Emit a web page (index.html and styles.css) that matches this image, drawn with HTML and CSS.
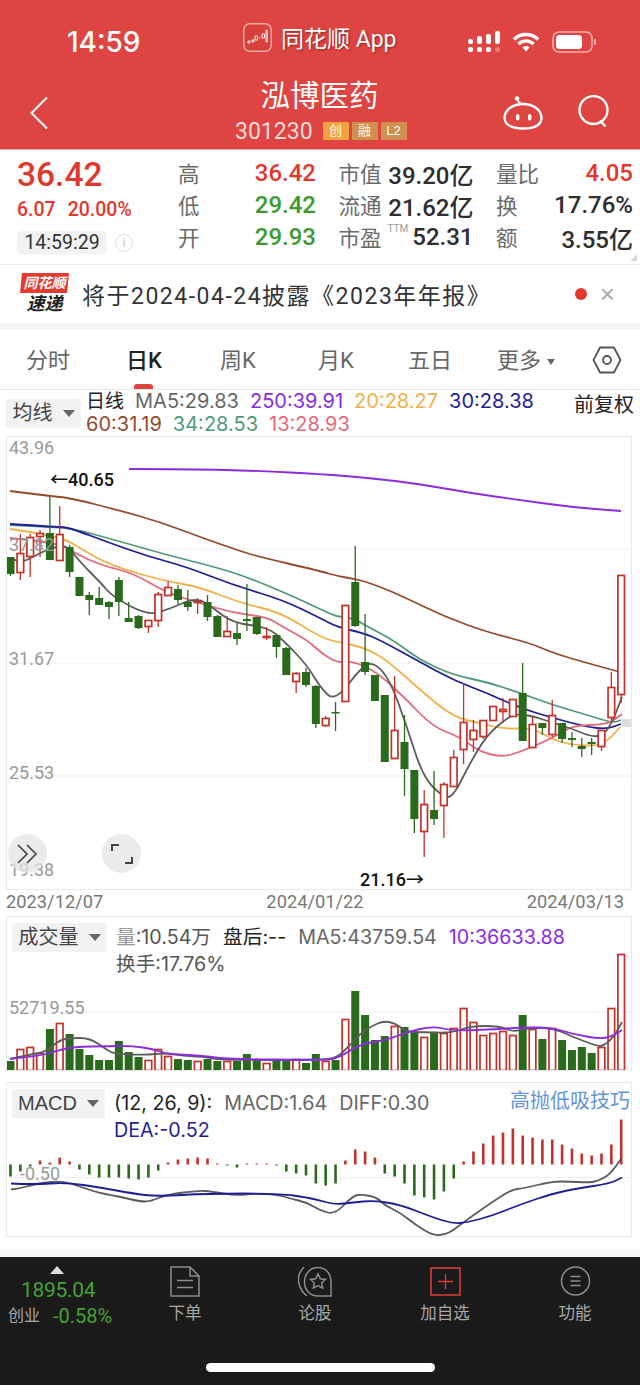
FILE: index.html
```html
<!DOCTYPE html>
<html lang="zh-CN">
<head>
    <meta charset="UTF-8">
    <meta name="viewport" content="width=device-width, initial-scale=1.0">
    <title>泓博医药</title>
    <link rel="stylesheet" href="styles.css">
</head>
<body>
    <div class="top-bar">
        <div class="status-row">
            <span class="clock">14:59</span>
            <div class="app-name">
                <svg class="app-icon" width="29" height="29" viewBox="0 0 29 29">
                    <rect x="0.75" y="0.75" width="27.5" height="27.5" rx="6" fill="#d8403c" stroke="#f0aaa6" stroke-width="1.5"/>
                    <path d="M5 18h2v2H5zM9 17h2v2H9zM12 13h2.500v4H12zM16 15h1.500M19 11h2.500v4H19zM23 7h1.200v12H23z" stroke="#fff" stroke-width="0.9" fill="none"/>
                </svg>
                <span>同花顺 App</span>
            </div>
            <div class="status-icons">
                <svg width="32" height="22" viewBox="0 0 32 22">
                    <g fill="#fff">
                        <rect x="0" y="16" width="5" height="5" rx="2"/>
                        <rect x="9" y="16" width="5" height="5" rx="2"/>
                        <rect x="18" y="16" width="5" height="5" rx="2"/>
                        <rect x="27" y="16" width="5" height="5" rx="2" opacity="0.3"/>
                        <rect x="0" y="8" width="5" height="5" rx="2"/>
                        <rect x="9" y="5" width="5" height="8" rx="2"/>
                        <rect x="18" y="3" width="5" height="10" rx="2"/>
                        <rect x="27" y="0" width="5" height="13" rx="2"/>
                    </g>
                </svg>
                <svg width="28" height="20" viewBox="0 0 28 20">
                    <path d="M2 7.5a17 17 0 0 1 24 0M6.5 12a10.5 10.5 0 0 1 15 0" fill="none" stroke="#fff" stroke-width="3.4"/>
                    <path d="M10.5 15.5a5 5 0 0 1 7 0L14 19.5z" fill="#fff"/>
                </svg>
                <svg width="45" height="22" viewBox="0 0 45 22">
                    <rect x="1" y="1" width="39" height="20" rx="6" fill="none" stroke="#f3b0ad" stroke-width="1.6"/>
                    <rect x="4" y="4" width="26" height="14" rx="3.5" fill="#fff"/>
                    <rect x="42" y="8" width="2" height="6" rx="1" fill="#f3b0ad"/>
                </svg>
            </div>
        </div>
        <div class="title-row">
            <svg class="back-icon" width="20" height="34" viewBox="0 0 20 34">
                <path d="M18 1.5 2.5 17 18 32.5" fill="none" stroke="#fff" stroke-width="2"/>
            </svg>
            <div class="stock-title">
                <h1>泓博医药</h1>
                <div class="stock-code">
                    <span class="code">301230</span>
                    <span class="badge badge-orange">创</span>
                    <span class="badge">融</span>
                    <span class="badge">L2</span>
                </div>
            </div>
            <div class="title-icons">
                <svg width="40" height="36" viewBox="0 0 40 36">
                    <circle cx="14" cy="3.5" r="2.2" fill="#fff"/>
                    <path d="M14 4c.8 2 2 3.500 4 4.500" fill="none" stroke="#fff" stroke-width="2"/>
                    <path d="M20 9c10 0 18 5.500 18.500 13.500C38.500 30 31 33.500 20 33.500S1.500 30 1.500 22.500C2 14.500 10 9 20 9z" fill="none" stroke="#fff" stroke-width="2.400"/>
                    <rect x="13" y="19" width="3.400" height="6.500" rx="1.700" fill="#fff"/>
                    <rect x="25" y="19" width="3.400" height="6.500" rx="1.700" fill="#fff"/>
                </svg>
                <svg width="34" height="32" viewBox="0 0 34 32">
                    <circle cx="16.5" cy="15" r="14" fill="none" stroke="#fff" stroke-width="2.3"/>
                    <path d="M23 25.5 28.500 31.500" stroke="#fff" stroke-width="2.3"/>
                </svg>
            </div>
        </div>
    </div>

    <div class="quote">
        <div class="quote-main">
            <div class="price">36.42</div>
            <div class="change"><span>6.07</span><span>20.00%</span></div>
            <div class="quote-time">
                <span class="time-pill">14:59:29</span>
                <span class="info-icon">i</span>
            </div>
        </div>
        <div class="quote-grid">
            <div class="cell"><span class="label">高</span><span class="up">36.42</span></div>
            <div class="cell"><span class="label">市值</span><span>39.20亿</span></div>
            <div class="cell"><span class="label">量比</span><span class="up">4.05</span></div>
            <div class="cell"><span class="label">低</span><span class="down">29.42</span></div>
            <div class="cell"><span class="label">流通</span><span>21.62亿</span></div>
            <div class="cell"><span class="label">换</span><span>17.76%</span></div>
            <div class="cell"><span class="label">开</span><span class="down">29.93</span></div>
            <div class="cell"><span class="label">市盈<sup>TTM</sup></span><span>52.31</span></div>
            <div class="cell"><span class="label">额</span><span>3.55亿</span></div>
        </div>
        <span class="corner"></span>
    </div>

    <div class="notice">
        <div class="notice-logo">
            <span class="logo-top">同花顺</span>
            <span class="logo-bottom">速递</span>
        </div>
        <span class="notice-text">将于2024-04-24披露《2023年年报》</span>
        <span class="notice-dot"></span>
        <span class="notice-close">×</span>
    </div>

    <div class="tabs">
        <span class="tab tab-1">分时</span>
        <span class="tab tab-2 active">日K</span>
        <span class="tab tab-3">周K</span>
        <span class="tab tab-4">月K</span>
        <span class="tab tab-5">五日</span>
        <span class="tab tab-6">更多<i class="caret small"></i></span>
        <svg class="hex-icon" width="30" height="28" viewBox="0 0 30 28">
            <path d="M8 1.5h14L28.500 14 22 26.500H8L1.500 14z" fill="none" stroke="#555" stroke-width="1.8" stroke-linejoin="round"/>
            <circle cx="15" cy="14" r="4" fill="none" stroke="#555" stroke-width="1.8"/>
        </svg>
    </div>

    <div class="kline-head">
        <div class="select select-ma">均线<i class="caret"></i></div>
        <div class="legend">
            <span class="ink">日线</span>
            <span class="ma5">MA5:29.83</span>
            <span class="ma250">250:39.91</span>
            <span class="ma20">20:28.27</span>
            <span class="ma30">30:28.38</span>
            <span class="ma60">60:31.19</span>
            <span class="ma34">34:28.53</span>
            <span class="ma13">13:28.93</span>
        </div>
        <span class="adjust">前复权</span>
    </div>

    <div class="panel kline-panel">
        <svg id="klineChart" class="chart" viewBox="6 436 626 454"></svg>
        <button class="round-btn btn-more">
            <svg width="24" height="20" viewBox="0 0 24 20"><path d="M2 1l9 9-9 9M11 1l9 9-9 9" fill="none" stroke="#444" stroke-width="1.7"/></svg>
        </button>
        <button class="round-btn btn-full">
            <svg width="22" height="22" viewBox="0 0 22 22"><path d="M1 8V2h7M21 14v6h-7" fill="none" stroke="#444" stroke-width="2"/></svg>
        </button>
    </div>
    <div class="dates">
        <span>2023/12/07</span>
        <span>2024/01/22</span>
        <span>2024/03/13</span>
    </div>

    <div class="panel sub-panel">
        <svg id="volChart" class="chart" viewBox="6 916 626 155"></svg>
        <div class="sub-head">
            <div class="select select-vol">成交量<i class="caret"></i></div>
            <div class="sub-legend">
                <span><b class="muted">量</b>:10.54万</span>
                <span class="ink">盘后:--</span>
                <span class="ma5">MA5:43759.54</span>
                <span class="ma250">10:36633.88</span>
                <span class="wide">换手:17.76%</span>
            </div>
        </div>
    </div>

    <div class="panel sub-panel macd-panel">
        <svg id="macdChart" class="chart" viewBox="6 1082 626 154"></svg>
        <div class="sub-head">
            <div class="select select-macd">MACD<i class="caret"></i></div>
            <div class="sub-legend">
                <span class="ink">(12, 26, 9):</span>
                <span class="ma5">MACD:1.64</span>
                <span class="ma5">DIFF:0.30</span>
                <span class="ma30 wide">DEA:-0.52</span>
            </div>
            <span class="tip-link">高抛低吸技巧</span>
        </div>
    </div>

    <div class="bottom-nav">
        <div class="index-box">
            <i class="index-arrow"></i>
            <div class="index-value">1895.04</div>
            <div class="index-change"><span>创业</span><b>-0.58%</b></div>
        </div>
        <div class="nav-item">
            <svg width="30" height="31" viewBox="0 0 30 31">
                <path d="M1 1h19l9 9v20H1zM20 1v9h9M7 14.5h16M7 21.5h16" fill="none" stroke="#8c8c8c" stroke-width="1.5"/>
            </svg>
            <span>下单</span>
        </div>
        <div class="nav-item">
            <svg width="34" height="31" viewBox="0 0 34 31">
                <path d="M33 30H20C12 30 6.500 24 6.500 16S12 1.500 20 1.500 33 8 33 16z" fill="none" stroke="#8c8c8c" stroke-width="1.5"/>
                <path d="M6 1C1 6-.2 12 .8 17 2 23 5 27 9 30" fill="none" stroke="#8c8c8c" stroke-width="1.5"/>
                <path d="M20 8l2.300 4.700 5.200.7-3.800 3.600.9 5.100-4.600-2.400-4.600 2.400.9-5.100-3.800-3.600 5.200-.7z" fill="none" stroke="#8c8c8c" stroke-width="1.5"/>
            </svg>
            <span>论股</span>
        </div>
        <div class="nav-item">
            <svg width="31" height="31" viewBox="0 -1 31 31">
                <rect x="1" y="1" width="29" height="27" fill="none" stroke="#d63a34" stroke-width="1.6"/>
                <path d="M15.5 7v15M8 14.5h15" stroke="#d63a34" stroke-width="1.4"/>
            </svg>
            <span>加自选</span>
        </div>
        <div class="nav-item">
            <svg width="31" height="31" viewBox="0 0 31 31">
                <circle cx="15.5" cy="15" r="14" fill="none" stroke="#8c8c8c" stroke-width="1.5"/>
                <path d="M10.5 10.5h10M10.5 15h10M10.5 19.5h10" stroke="#8c8c8c" stroke-width="1.5"/>
            </svg>
            <span>功能</span>
        </div>
        <span class="home-bar"></span>
    </div>

    <script src="script.js"></script>
</body>
</html>
```

FILE: styles.css
```css
* {
    box-sizing: border-box;
}

body {
    width: 640px;
    height: 1385px;
    margin: 0;
    overflow: hidden;
    font-family: "Liberation Sans", "Noto Sans CJK SC", sans-serif;
    color: #333;
    background: #fff;
}

/* red header */
.top-bar {
    height: 150px;
    color: #fff;
    background: #de4442;
    border-bottom: 1px solid #eeb4b0;
}

.status-row {
    position: relative;
    display: flex;
    align-items: center;
    justify-content: space-between;
    height: 72px;
    padding: 12px 43px 0 67px;
}

.clock {
    font-family: "Inter", sans-serif;
    font-size: 28px;
    font-weight: 500;
}

.app-name {
    position: absolute;
    top: 20px;
    left: 243px;
    display: flex;
    align-items: center;
    gap: 9px;
    font-size: 23px;
    font-family: "Roboto", "Noto Sans CJK SC", sans-serif;
    text-shadow: 1px 1px 2px rgba(90, 20, 20, 0.6);
}

.status-icons {
    display: flex;
    align-items: center;
    gap: 12px;
}

.title-row {
    display: flex;
    justify-content: space-between;
    height: 77px;
    padding: 0 29px;
}

.back-icon {
    margin-top: 24px;
}

.stock-title {
    position: absolute;
    left: 0;
    width: 640px;
    text-align: center;
}

.stock-title h1 {
    margin: 7px 0 0 -1px;
    font-size: 29.5px;
    font-weight: 400;
    line-height: 34px;
}

.stock-code {
    display: flex;
    align-items: center;
    gap: 3px;
    height: 20px;
    margin: 8px 0 0 235px;
}

.code {
    margin-right: 7px;
    font-family: "Roboto", sans-serif;
    font-size: 23px;
    color: #f8dcdc;
}

.badge {
    width: 26px;
    height: 18px;
    font-size: 13px;
    line-height: 18px;
    text-align: center;
    background: #cf9050;
}

.badge-orange {
    background: #f3a23e;
}

.title-icons {
    display: flex;
    gap: 34px;
    height: 36px;
    margin-top: 23px;
}

/* price block */
.quote {
    position: relative;
    display: flex;
    height: 115px;
    background: #fff;
    border-bottom: 1px solid #ececec;
    font-family: "Roboto", "Noto Sans CJK SC", sans-serif;
}

.quote-main {
    flex-shrink: 0;
    width: 178px;
    padding: 6px 0 0 17px;
}

.price {
    font-size: 33.5px;
    font-weight: 500;
    line-height: 38px;
    color: #e2382c;
}

.change {
    display: flex;
    gap: 12px;
    margin-top: 4px;
    font-size: 19.5px;
    font-weight: 500;
    line-height: 24px;
    color: #e2382c;
}

.quote-time {
    display: flex;
    align-items: center;
    gap: 8px;
    margin-top: 9px;
}

.time-pill {
    width: 90px;
    height: 23px;
    font-size: 19.5px;
    line-height: 23px;
    text-align: center;
    color: #333;
    background: #f2f2f2;
    border-radius: 5px;
}

.info-icon {
    width: 18px;
    height: 18px;
    font-size: 13px;
    line-height: 15px;
    text-align: center;
    color: #ccc;
    border: 1.5px solid #ddd;
    border-radius: 50%;
}

.quote-grid {
    display: grid;
    grid-template-columns: 138px 135px 137px;
    grid-auto-rows: 32px;
    column-gap: 22.5px;
    padding-top: 7px;
}

.cell {
    display: flex;
    align-items: center;
    justify-content: space-between;
    font-size: 24px;
    font-weight: 500;
    color: #2e2e2e;
}

.label {
    position: relative;
    top: -1px;
    font-size: 21.5px;
    font-weight: 400;
    color: #6a6a6a;
}

.label sup {
    position: absolute;
    top: 3px;
    left: 49px;
    font-size: 10px;
    line-height: 10px;
    color: #999;
}

.up {
    color: #e2382c;
}

.down {
    color: #3c9a2e;
}

.corner {
    position: absolute;
    right: 3px;
    bottom: 3px;
    border-left: 7px solid transparent;
    border-bottom: 7px solid #d8d8d8;
}

/* notice */
.notice {
    display: flex;
    align-items: center;
    height: 58px;
    padding: 0 25px 0 20px;
    background: #fff;
}

.notice-logo {
    display: flex;
    flex-direction: column;
    align-items: center;
    width: 49px;
    margin-right: 13px;
    font-style: italic;
    font-weight: 700;
}

.logo-top {
    width: 49px;
    height: 20px;
    font-size: 14px;
    line-height: 20px;
    text-align: center;
    color: #fff;
    background: #e53a2f;
    clip-path: polygon(4% 0, 100% 0, 96% 100%, 0 100%);
}

.logo-bottom {
    margin-top: 1px;
    font-size: 18px;
    line-height: 21px;
    color: #222;
}

.notice-text {
    flex: 1;
    font-family: "Roboto", "Noto Sans CJK SC", sans-serif;
    font-size: 23px;
    letter-spacing: 1.5px;
    color: #333;
}

.notice-dot {
    width: 12px;
    height: 12px;
    margin-right: 13px;
    background: #e2382c;
    border-radius: 50%;
}

.notice-close {
    font-size: 26px;
    line-height: 26px;
    color: #aaa;
}

/* tabs */
.tabs {
    position: relative;
    height: 67px;
    background: #fff;
    border-top: 7px solid #f5f5f5;
    border-bottom: 1px solid #e6e6e6;
}

.tab {
    position: absolute;
    top: 15px;
    font-family: "Roboto", "Noto Sans CJK SC", sans-serif;
    font-size: 22px;
    line-height: 32px;
    color: #666;
}

.tab-1 { left: 26px; }
.tab-2 { left: 126px; }
.tab-3 { left: 220px; }
.tab-4 { left: 318px; }
.tab-5 { left: 408px; }
.tab-6 { left: 497px; }

.tab.active {
    font-weight: 500;
    color: #222;
}

.tab.active::after {
    content: "";
    position: absolute;
    top: 39px;
    left: 8px;
    width: 19px;
    height: 5px;
    background: #de4442;
    border-radius: 3px 3px 0 0;
}

.hex-icon {
    position: absolute;
    top: 16px;
    left: 592px;
}

.caret {
    display: inline-block;
    margin-left: 10px;
    vertical-align: 3px;
    border-top: 7px solid #666;
    border-left: 6px solid transparent;
    border-right: 6px solid transparent;
}

.caret.small {
    margin-left: 6px;
    border-top-width: 6px;
    border-left-width: 4.5px;
    border-right-width: 4.5px;
}

/* K line */
.kline-head {
    position: relative;
    display: flex;
    height: 46px;
    padding: 9px 0 0 6px;
    background: #fff;
}

.select {
    height: 29px;
    font-size: 20px;
    line-height: 29px;
    text-align: center;
    color: #444;
    background: #f2f2f2;
    border-radius: 2px;
}

.select-ma {
    width: 75px;
}

.legend {
    display: flex;
    flex-wrap: wrap;
    align-content: flex-start;
    column-gap: 11px;
    width: 480px;
    margin: -9px 0 0 5px;
    font-family: "Inter", "Noto Sans CJK SC", sans-serif;
    font-size: 20px;
    line-height: 23px;
}

.legend .ink {
    font-size: 19px;
}

.ink { color: #222; }
.muted { font-weight: 400; color: #999; }
.ma5 { color: #666; }
.ma250 { color: #8b2be2; }
.ma20 { color: #efb24a; }
.ma30 { color: #1e1e96; }
.ma60 { color: #96492c; }
.ma34 { color: #4f9b78; }
.ma13 { color: #e4697a; }

.adjust {
    position: absolute;
    top: 3px;
    right: 6px;
    font-size: 20px;
    line-height: 24px;
    color: #222;
}

.panel {
    position: relative;
    width: 626px;
    margin-left: 6px;
    background: #fff;
    outline: 1px solid #e8e8e8;
    outline-offset: -1px;
}

.kline-panel {
    height: 454px;
}

.chart {
    display: block;
    width: 100%;
    height: 100%;
}

.chart text {
    font-family: "Roboto", sans-serif;
    font-size: 18px;
    fill: #999;
}

.chart text.mark {
    font-family: "Roboto", "Noto Sans CJK SC", sans-serif;
    font-weight: 500;
    fill: #111;
}

.round-btn {
    position: absolute;
    top: 398px;
    display: flex;
    align-items: center;
    justify-content: center;
    width: 39px;
    height: 39px;
    padding: 0;
    background: rgba(228, 228, 228, 0.75);
    border: none;
    border-radius: 50%;
}

.btn-more { left: 2px; }
.btn-full { left: 96px; }

.dates {
    display: flex;
    justify-content: space-between;
    height: 26px;
    padding: 0 16px 0 6px;
    font-family: "Roboto", sans-serif;
    font-size: 18.3px;
    line-height: 24px;
    color: #777;
    background: #fff;
}

/* volume and MACD */
.sub-panel {
    height: 155px;
}

.macd-panel {
    margin-top: 11px;
}

.sub-head {
    position: absolute;
    top: 7px;
    left: 6px;
    right: 0;
    display: flex;
    gap: 9px;
}

.select-vol {
    flex-shrink: 0;
    width: 95px;
}

.select-macd {
    flex-shrink: 0;
    width: 93px;
}

.sub-legend {
    display: flex;
    flex-wrap: wrap;
    align-content: flex-start;
    column-gap: 12px;
    width: 470px;
    padding-top: 1px;
    font-family: "Inter", "Noto Sans CJK SC", sans-serif;
    font-size: 19.7px;
    line-height: 27px;
    color: #555;
}

.wide {
    flex-basis: 100%;
}

.tip-link {
    position: absolute;
    top: -1px;
    right: 2px;
    font-size: 20px;
    line-height: 26px;
    color: #5f93dd;
}

/* bottom nav */
.bottom-nav {
    position: absolute;
    top: 1250px;
    left: 0;
    display: flex;
    width: 640px;
    height: 135px;
    color: #a8a8a8;
    background: #1a1a1a;
    border-top: 7px solid #f5f5f5;
}

.index-box {
    width: 120px;
    padding: 9px 0 0 8px;
    font-family: "Roboto", "Noto Sans CJK SC", sans-serif;
}

.index-arrow {
    display: block;
    width: 0;
    margin-left: 42px;
    border-bottom: 8px solid #ddd;
    border-left: 7px solid transparent;
    border-right: 7px solid transparent;
}

.index-value {
    margin: 2px 0 0 13px;
    font-size: 21px;
    line-height: 28px;
    letter-spacing: -0.3px;
    color: #46a236;
}

.index-change {
    display: flex;
    gap: 13px;
    font-size: 16px;
    line-height: 24px;
}

.index-change b {
    font-size: 20px;
    font-weight: 400;
    color: #46a236;
}

.nav-item {
    display: flex;
    flex-direction: column;
    align-items: center;
    width: 130px;
    padding-top: 9px;
    font-size: 16.5px;
    line-height: 24px;
}

.nav-item svg {
    margin-bottom: 4px;
}

.home-bar {
    position: absolute;
    top: 106px;
    left: 206px;
    width: 229px;
    height: 9px;
    background: #fff;
    border-radius: 5px;
}
```

FILE: script.js
```js
const candleGreen = "#2a6a1c";
const candleRed = "#c4302a";
const firstX = 10.5;
const stepX = 9.85;
const svgNS = "http://www.w3.org/2000/svg";

// type, high, box top, box bottom, low (page y)
const candles = [
    ["g",557,557,574,576],["r",534,553,573,580],["r",534,537,557,577],["r",530,533,537,557],
    ["g",497,533,560,560],["r",506,534,561,561],["g",545,547,572,577],["g",577,577,596,596],
    ["g",592,595,600,615],["g",587,598,605,605],["g",601,602,607,619],["g",577,580,602,616],
    ["g",602,618,622,622],["g",615,616,628,629],["r",620,620,627,633],["r",592,594,621,627],
    ["r",581,587,596,596],["g",585,589,600,604],["g",590,602,607,611],["r",598,601,602,614],
    ["g",595,602,617,621],["g",615,616,637,637],["r",616,631,637,637],["g",622,633,639,645],
    ["g",584,619,621,631],["g",617,617,634,635],["r",627,636,638,640],["g",635,635,647,658],
    ["g",647,648,675,675],["r",672,673,682,693],["g",668,672,685,687],["g",685,686,724,728],
    ["r",716,718,726,727],["g",702,712,713,731],["r",605,605,702,702],["g",546,582,626,627],
    ["g",614,662,672,675],["g",675,675,701,701],["g",695,695,762,762],["r",676,730,759,759],
    ["g",715,742,769,796],["g",770,770,819,833],["r",790,804,832,857],["g",771,810,819,825],
    ["r",782,784,806,838],["r",750,757,787,787],["r",683,722,750,764],["r",720,730,740,752],
    ["r",720,720,737,739],["r",706,706,721,721],["r",698,709,712,723],["r",699,699,717,717],
    ["g",663,693,741,741],["r",717,724,748,748],["g",723,723,728,735],["r",700,715,735,737],
    ["g",723,723,739,743],["g",732,738,740,747],["g",738,746,749,757],["g",738,742,744,755],
    ["r",730,730,747,751],["r",672,687,718,720],["r",575,575,695,703]
];

const maLines = [
    ["#8b2be2", [[129,469],[190,469],[260,471],[320,474],[370,478],[420,484],[470,493],[520,500],[570,507],[621,511]]],
    ["#96492c", [[10,491],[50,496],[70,498],[118,510],[160,522],[200,537],[240,551],[260,557],[320,571],[337,576],[355,579],[370,583],[400,595],[445,617],[490,633],[530,643],[553,653],[587,663],[620,672]]],
    ["#4f9b78", [[10,525],[50,527],[70,528],[115,540],[167,555],[215,567],[247,577],[290,595],[320,609],[337,617],[353,618],[370,628],[393,640],[420,660],[453,675],[487,682],[520,693],[553,705],[587,715],[613,723],[621,720]]],
    ["#1e1e96", [[10,524],[60,527],[70,528],[110,543],[147,556],[187,567],[233,585],[283,600],[320,618],[337,627],[363,633],[380,640],[420,662],[453,680],[487,693],[520,708],[553,718],[587,727],[607,729],[621,724]]],
    ["#efb24a", [[10,529],[60,536],[83,550],[110,565],[160,580],[200,587],[240,603],[280,612],[320,637],[337,642],[363,647],[387,660],[420,690],[453,717],[480,723],[503,729],[533,728],[553,740],[573,745],[603,746],[620,727]]],
    ["#e4697a", [[10,538],[60,543],[73,552],[100,565],[133,573],[167,593],[200,603],[233,613],[267,617],[283,627],[307,640],[320,652],[337,663],[353,661],[377,672],[407,700],[433,727],[460,737],[480,752],[503,757],[520,752],[553,738],[573,725],[607,725],[622,714]]],
    ["#5c5c5c", [[10,558],[20,563],[33,557],[50,548],[67,545],[80,562],[100,582],[113,597],[147,615],[167,610],[197,597],[213,608],[233,623],[267,627],[283,640],[307,665],[320,687],[335,702],[363,665],[375,663],[390,680],[407,727],[423,777],[443,797],[453,797],[470,763],[487,735],[507,718],[517,714],[533,716],[550,722],[570,728],[597,739],[610,728],[622,697]]]
];

// volume bar tops, first letter is r/g
const volumes = [
    "g1061","r1049","r1047","r1053","g1029","r1023","g1034","g1049","g1055","g1060","g1060","g1041",
    "g1052","g1057","r1060","r1049","r1056","g1059","g1060","r1061","g1059","g1061","r1061","g1061",
    "g1054","g1060","r1063","g1061","g1059","r1059","g1063","g1054","r1061","g1060","r1019","g991",
    "g1015","g1040","g1036","r1026","g1027","g1033","r1037","g1033","r1033","r1028","r1008","r1022",
    "r1035","r1033","r1031","r1035","g1015","r1029","g1039","r1028","g1040","g1050","g1047","g1053",
    "r1047","r1008","r954"
];

const volLines = [
    ["#5c5c5c", [[10,1059],[33,1054],[45,1052],[60,1040],[70,1038],[90,1038],[107,1050],[115,1054],[147,1055],[163,1053],[187,1056],[207,1057],[220,1060],[320,1060],[337,1058],[350,1045],[360,1034],[370,1027],[383,1021],[395,1023],[407,1032],[420,1032],[453,1033],[470,1026],[500,1026],[513,1032],[527,1028],[553,1028],[573,1037],[597,1046],[603,1046],[613,1038],[622,1022]]],
    ["#8b2be2", [[10,1059],[40,1056],[60,1050],[73,1047],[110,1046],[133,1046],[153,1049],[167,1054],[207,1056],[223,1059],[320,1060],[337,1059],[360,1044],[387,1040],[407,1032],[433,1026],[453,1031],[500,1029],[527,1027],[553,1028],[573,1034],[600,1039],[613,1036],[622,1030]]]
];

// MACD bars: page y of the far end, zero line at 1164
const macdBars = [
    1176,1171,1166,1160,1162,1157,1161,1169,1174,1177,1177,1177,1178,1179,1177,1170,
    1162,1159,1158,1157,1158,1163,1165,1167,1163,1163,1163,1165,1171,1173,1175,1183,
    1185,1183,1160,1149,1151,1157,1173,1176,1183,1195,1197,1199,1191,1178,1161,1151,
    1143,1135,1132,1128,1135,1137,1139,1139,1144,1148,1153,1155,1153,1144,1119
];

const macdLines = [
    ["#5c5c5c", [[11,1189],[20,1188],[33,1184],[60,1180],[80,1186],[97,1192],[113,1195],[123,1197],[140,1201],[150,1201],[167,1194],[200,1190],[210,1191],[237,1195],[253,1193],[277,1194],[290,1198],[307,1202],[320,1210],[335,1214],[353,1195],[363,1194],[377,1197],[385,1205],[400,1212],[415,1224],[433,1235],[445,1234],[453,1230],[463,1222],[493,1201],[512,1189],[523,1188],[552,1181],[570,1181],[587,1182],[597,1181],[610,1174],[622,1157]]],
    ["#1e1e96", [[11,1183],[33,1184],[67,1182],[100,1187],[133,1193],[157,1196],[207,1193],[280,1193],[307,1197],[320,1200],[335,1204],[353,1202],[373,1200],[400,1204],[433,1217],[453,1223],[467,1222],[493,1215],[520,1204],[553,1193],[577,1188],[610,1183],[622,1177]]]
];

function add(svg, tag, attrs, text) {
    const el = document.createElementNS(svgNS, tag);
    for (const key in attrs) {
        el.setAttribute(key, attrs[key]);
    }
    if (text) {
        el.textContent = text;
    }
    svg.appendChild(el);
    return el;
}

function gridLine(svg, y) {
    add(svg, "line", { x1: 6, x2: 632, y1: y, y2: y, stroke: "#eeeeee", "stroke-width": 1 });
}

// rounds the corners by running through the midpoints
function curve(svg, color, points) {
    let d = "M" + points[0].join(" ");
    for (let i = 1; i < points.length - 1; i++) {
        const midX = (points[i][0] + points[i + 1][0]) / 2;
        const midY = (points[i][1] + points[i + 1][1]) / 2;
        d += " Q" + points[i].join(" ") + " " + midX + " " + midY;
    }
    d += " L" + points[points.length - 1].join(" ");
    add(svg, "path", { d: d, fill: "none", stroke: color, "stroke-width": 1.8 });
}

function bar(svg, type, x, top, bottom) {
    const color = type === "r" ? candleRed : candleGreen;
    if (type === "r") {
        add(svg, "rect", { x: x - 3.3, y: top + 0.5, width: 6.6, height: Math.max(bottom - top - 1, 1), fill: "#fff", stroke: color, "stroke-width": 1.7 });
    } else {
        add(svg, "rect", { x: x - 4, y: top, width: 8, height: Math.max(bottom - top, 1.5), fill: color });
    }
}

function drawKline() {
    const svg = document.getElementById("klineChart");
    [549, 663, 776].forEach(y => gridLine(svg, y));
    add(svg, "rect", { x: 622, y: 719, width: 10, height: 8, fill: "#dddddd" });

    maLines.forEach(l => curve(svg, l[0], l[1]));
    candles.forEach((c, i) => {
        const x = firstX + i * stepX;
        const color = c[0] === "r" ? candleRed : candleGreen;
        add(svg, "line", { x1: x, x2: x, y1: c[1], y2: c[4], stroke: color, "stroke-width": 1.3 });
        bar(svg, c[0], x, c[2], c[3]);
    });

    const labels = [["43.96", 454], ["37.82", 551], ["31.67", 665], ["25.53", 779], ["19.38", 876]];
    labels.forEach(l => add(svg, "text", { x: 9, y: l[1] }, l[0]));
    add(svg, "text", { x: 50, y: 486, class: "mark" }, "←40.65");
    add(svg, "text", { x: 360, y: 886, class: "mark" }, "21.16→");
}

function drawVolume() {
    const svg = document.getElementById("volChart");
    gridLine(svg, 1012);
    volumes.forEach((v, i) => {
        bar(svg, v[0], firstX + i * stepX, Number(v.slice(1)), 1071);
    });
    volLines.forEach(l => curve(svg, l[0], l[1]));
    add(svg, "text", { x: 9, y: 1014 }, "52719.55");
}

function drawMacd() {
    const svg = document.getElementById("macdChart");
    gridLine(svg, 1177);
    macdBars.forEach((y, i) => {
        const x = firstX + i * stepX;
        const color = y < 1164 ? candleRed : candleGreen;
        add(svg, "line", { x1: x, x2: x, y1: 1164, y2: y, stroke: color, "stroke-width": 2.6 });
    });
    macdLines.forEach(l => curve(svg, l[0], l[1]));
    add(svg, "text", { x: 20, y: 1179 }, "-0.50");
}

drawKline();
drawVolume();
drawMacd();
```
